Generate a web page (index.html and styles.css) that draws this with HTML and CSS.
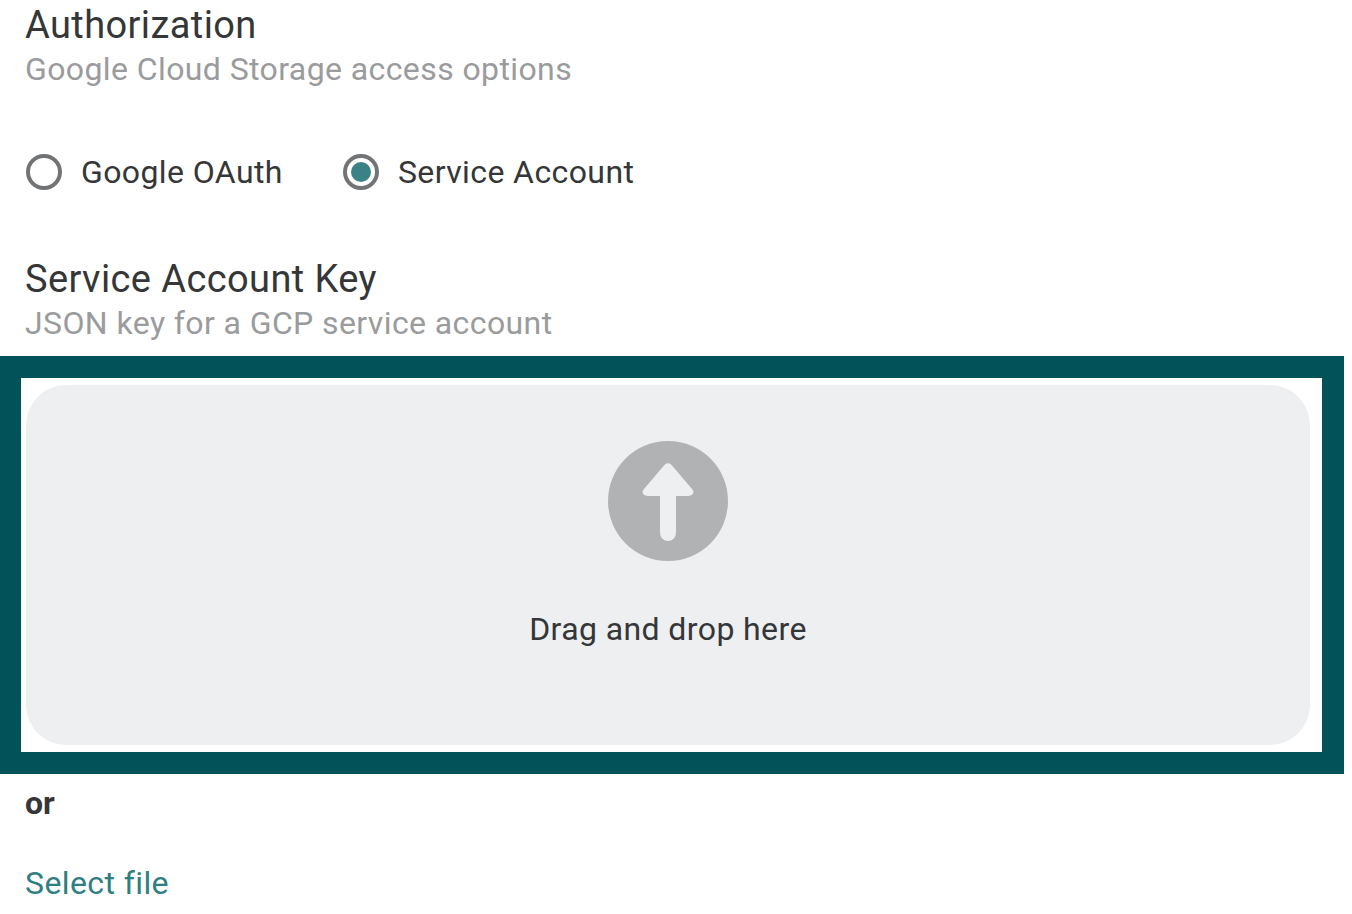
FILE: index.html
```html
<!DOCTYPE html>
<html lang="en">
<head>
    <meta charset="UTF-8">
    <meta name="viewport" content="width=device-width, initial-scale=1.0">
    <title>Authorization</title>
    <link rel="stylesheet" href="styles.css">
</head>
<body>
    <div class="section">
        <h2 class="title">Authorization</h2>
        <p class="hint">Google Cloud Storage access options</p>
    </div>
    <div class="radios">
        <label class="radio"><span class="dot"></span>Google OAuth</label>
        <label class="radio checked"><span class="dot"></span>Service Account</label>
    </div>
    <div class="section">
        <h2 class="title">Service Account Key</h2>
        <p class="hint">JSON key for a GCP service account</p>
    </div>
    <div class="focus-box">
        <div class="dropzone">
            <svg class="upload-icon" width="120" height="120" viewBox="0 0 120 120">
                <circle cx="60" cy="60" r="60" fill="#b1b2b4"/>
                <path fill="#eeeff1" d="M52 55H39.500C35 55 33 51 36 48L56 24.500C58.500 21.500 61.500 21.500 64 24.500L84 48C87 51 85 55 80.500 55H68V92A8 8 0 0 1 52 92Z"/>
            </svg>
            <div class="drop-label">Drag and drop here</div>
        </div>
    </div>
    <div class="or">or</div>
    <a class="select-file" href="#">Select file</a>
</body>
</html>
```

FILE: styles.css
```css
body {
    font-family: Roboto, sans-serif;
    background: #fff;
    color: #343638;
    margin: 0;
    height: 914px;
    overflow: hidden;
    letter-spacing: 0.4px;
}
.section {
    padding-left: 25px;
}
.title {
    font-size: 38px;
    font-weight: 400;
    line-height: 44px;
    margin: 0;
    padding-top: 3px;
}
.hint {
    font-size: 32px;
    line-height: 44px;
    margin: 0;
    color: #9a9b9d;
}
.radios {
    display: flex;
    gap: 60px;
    padding: 61px 0 62px 26px;
}
.radio {
    display: flex;
    align-items: center;
    gap: 19px;
    font-size: 32px;
    line-height: 40px;
}
.dot {
    width: 36px;
    height: 36px;
    box-sizing: border-box;
    border: 4px solid #727375;
    border-radius: 50%;
    display: flex;
    align-items: center;
    justify-content: center;
}
.checked .dot::after {
    content: "";
    width: 20px;
    height: 20px;
    border-radius: 50%;
    background: #3a8285;
}
.focus-box {
    margin: 11px 8px 0 0;
    height: 360px;
    border: 22px solid #025359;
    border-left-width: 21px;
    display: flex;
    padding: 7px 12px 7px 5px;
}
.dropzone {
    flex-grow: 1;
    background: #eeeff1;
    border-radius: 40px;
    display: flex;
    flex-direction: column;
    align-items: center;
    padding-top: 56px;
}
.drop-label {
    font-size: 32px;
    line-height: 40px;
    margin-top: 48px;
}
.or {
    font-size: 32px;
    font-weight: 700;
    line-height: 40px;
    padding: 9px 0 0 25px;
    letter-spacing: 0;
}
.select-file {
    display: block;
    font-size: 32px;
    line-height: 40px;
    padding: 40px 0 0 25px;
    color: #2f7f82;
    text-decoration: none;
}
```
